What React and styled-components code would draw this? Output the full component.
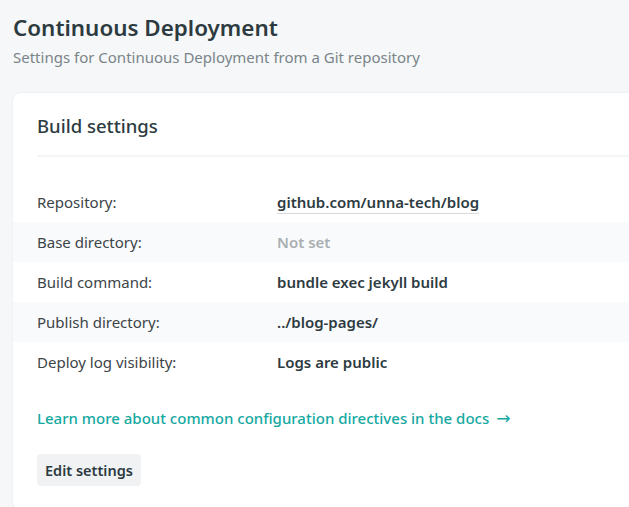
import React from 'react';
import styled, { createGlobalStyle } from 'styled-components';

const GlobalStyle = createGlobalStyle`
    html, body {
        margin: 0;
        padding: 0;
        background: #f5f7f8;
        font-family: "Noto Sans", "Open Sans", sans-serif;
        color: #2d3b41;
        overflow: hidden;
    }
`;

const rows = [
    { label: 'Repository:', value: 'github.com/unna-tech/blog', link: true },
    { label: 'Base directory:', value: 'Not set', muted: true },
    { label: 'Build command:', value: 'bundle exec jekyll build' },
    { label: 'Publish directory:', value: '../blog-pages/' },
    { label: 'Deploy log visibility:', value: 'Logs are public' },
];

const App = () => {
    return (
        <Page>
            <GlobalStyle />
            <Header>
                <Title>Continuous Deployment</Title>
                <Subtitle>Settings for Continuous Deployment from a Git repository</Subtitle>
            </Header>
            <Card>
                <CardHeader>Build settings</CardHeader>
                <Rows>
                    {rows.map((row) => (
                        <Row key={row.label}>
                            <Label>{row.label}</Label>
                            <Value muted={row.muted ? 1 : 0}>
                                {row.link ? <RepoLink>{row.value}</RepoLink> : row.value}
                            </Value>
                        </Row>
                    ))}
                </Rows>
                <DocsLink>Learn more about common configuration directives in the docs<Arrow>→</Arrow></DocsLink>
                <EditBtn>Edit settings</EditBtn>
            </Card>
        </Page>
    );
};

const Page = styled.div`
    padding: 12px 0 0 13px;
    height: 507px;
    box-sizing: border-box;
    overflow: hidden;
`;

const Header = styled.div`
    margin-bottom: 26px;
`;

const Title = styled.h1`
    margin: 0;
    font-size: 22.4px;
    font-weight: 600;
    line-height: 32px;
    color: #2d3b41;
`;

const Subtitle = styled.div`
    margin-top: 3px;
    font-size: 15px;
    line-height: 20px;
    color: #7a8589;
`;

const Card = styled.div`
    background: #ffffff;
    border-radius: 8px 0 0 8px;
    box-shadow: 0px 0px 2px rgba(14, 30, 37, 0.08);
    margin-right: -20px;
    padding: 18px 0 20px 0;
    height: 416px;
    box-sizing: border-box;
`;

const CardHeader = styled.h2`
    margin: 0 0 0 24px;
    padding-bottom: 14px;
    font-size: 18.5px;
    font-weight: 500;
    line-height: 30px;
    color: #2d3b41;
    border-bottom: 2px solid #f3f5f6;
`;

const Rows = styled.div`
    margin-top: 25px;
`;

const Row = styled.div`
    display: grid;
    grid-template-columns: 240px 1fr;
    align-items: center;
    height: 40px;
    padding-left: 24px;
    font-size: 15px;

    &:nth-child(even) {
        background: #f9fafb;
    }
`;

const Label = styled.div`
    color: #3c4448;
`;

const Value = styled.div`
    font-weight: 600;
    color: ${(p) => (p.muted ? '#a9afb2' : '#2d3b41')};
`;

const RepoLink = styled.span`
    border-bottom: 1px solid #d6dadc;
    padding-bottom: 1px;
`;

const DocsLink = styled.div`
    display: flex;
    align-items: center;
    height: 22px;
    margin: 25px 0 0 24px;
    font-size: 15px;
    font-weight: 500;
    color: #15a9a1;
    cursor: pointer;
`;

const Arrow = styled.span`
    margin-left: 7px;
    font-size: 17px;
    font-weight: 400;
    font-family: "DejaVu Sans", sans-serif;
`;

const EditBtn = styled.button`
    display: block;
    margin: 25px 0 0 24px;
    height: 32px;
    padding: 0 8px;
    border: none;
    border-radius: 4px;
    background: #f0f2f4;
    font-family: inherit;
    font-size: 14.5px;
    font-weight: 600;
    color: #2d3b41;
    cursor: pointer;
`;

export default App;
